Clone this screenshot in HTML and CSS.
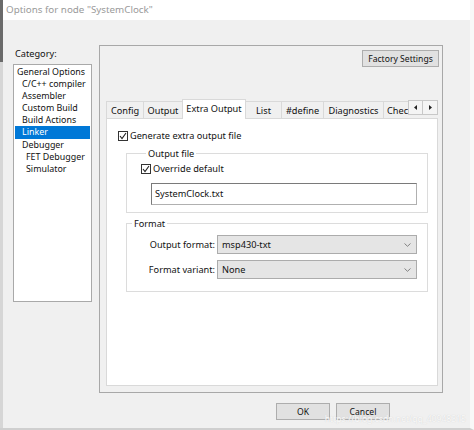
FILE: index.html
```html
<!DOCTYPE html>
<html>
<head>
<meta charset="utf-8">
<link rel="stylesheet" href="styles.css">
</head>
<body>
<div class="window">
  <div class="edge"><div class="edge-dark"></div><div class="edge-light"></div></div>
  <div class="frame">
    <div class="titlebar">Options for node "SystemClock"</div>
    <div class="client">
      <div class="left">
        <div class="cat-label">Category:</div>
        <div class="listbox">
          <div class="item lvl0">General Options</div>
          <div class="item lvl1">C/C++ compiler</div>
          <div class="item lvl1">Assembler</div>
          <div class="item lvl1">Custom Build</div>
          <div class="item lvl1">Build Actions</div>
          <div class="item lvl1 selected">Linker</div>
          <div class="item lvl1">Debugger</div>
          <div class="item lvl2">FET Debugger</div>
          <div class="item lvl2">Simulator</div>
        </div>
      </div>
      <div class="right">
        <div class="panel">
          <div class="panel-top"><div class="btn factory">Factory Settings</div></div>
          <div class="tabs">
            <div class="tab t-config">Config</div>
            <div class="tab t-output">Output</div>
            <div class="tab t-extra active">Extra Output</div>
            <div class="tab t-list">List</div>
            <div class="tab t-define">#define</div>
            <div class="tab t-diag">Diagnostics</div>
            <div class="tab t-chec">Chec</div>
            <div class="arrows">
              <div class="arrow"><svg width="4" height="5" viewBox="0 0 4 5"><polygon points="3,0 3,5 0,2.5" fill="#222"/></svg></div>
              <div class="arrow"><svg width="4" height="5" viewBox="0 0 4 5"><polygon points="1,0 1,5 4,2.5" fill="#222"/></svg></div>
            </div>
          </div>
          <div class="page">
            <div class="check-row">
              <span class="checkbox"><svg width="8" height="8" viewBox="0 0 8 8"><polyline points="1,4 3,6.5 7,1" fill="none" stroke="#222" stroke-width="1.1"/></svg></span>
              <span>Generate extra output file</span>
            </div>
            <fieldset class="group group-file">
              <legend>Output file</legend>
              <div class="check-row">
                <span class="checkbox"><svg width="8" height="8" viewBox="0 0 8 8"><polyline points="1,4 3,6.5 7,1" fill="none" stroke="#222" stroke-width="1.1"/></svg></span>
                <span>Override default</span>
              </div>
              <div class="textfield">SystemClock.txt</div>
            </fieldset>
            <fieldset class="group group-format">
              <legend>Format</legend>
              <div class="form-grid">
                <div class="flabel">Output format:</div>
                <div class="select"><span>msp430-txt</span><svg width="7" height="4" viewBox="0 0 7 4"><polyline points="0.5,0.5 3.5,3.3 6.5,0.5" fill="none" stroke="#777" stroke-width="0.9"/></svg></div>
                <div class="flabel">Format variant:</div>
                <div class="select"><span>None</span><svg width="7" height="4" viewBox="0 0 7 4"><polyline points="0.5,0.5 3.5,3.3 6.5,0.5" fill="none" stroke="#777" stroke-width="0.9"/></svg></div>
              </div>
            </fieldset>
          </div>
        </div>
        <div class="footer">
          <div class="btn ok">OK</div>
          <div class="btn cancel">Cancel</div>
        </div>
      </div>
    </div>
  </div>
  <div class="watermark">https://blog.csdn.net/qq_40948315</div>
</div>
</body>
</html>
```

FILE: styles.css
```css
* { box-sizing: border-box; }
html, body { margin: 0; padding: 0; }
body {
  width: 474px;
  height: 430px;
  overflow: hidden;
  font-family: "Noto Sans", "Open Sans", sans-serif;
  font-size: 9.2px;
  color: #111;
  background: #f0f0f0;
}
.window {
  position: relative;
  display: flex;
  width: 474px;
  height: 430px;
  border-right: 4px solid #f8f8f8;
  border-bottom: 2px solid #cfcfcf;
}
.edge { width: 3px; display: flex; flex-direction: column; }
.edge-dark { height: 62px; background: #6a6a6a; }
.edge-light { flex: 1; background: #d6d6d6; }
.frame { flex: 1; display: flex; flex-direction: column; }
.titlebar {
  height: 20px;
  background: #fff;
  color: #9a9a9a;
  font-size: 9.8px;
  line-height: 20px;
  padding-left: 3px;
}
.client {
  flex: 1;
  display: flex;
  padding-top: 25px;
  background: #f0f0f0;
}
.left {
  width: 96px;
  padding-left: 10px;
  padding-right: 7px;
}
.cat-label {
  height: 19px;
  padding-top: 2px;
  padding-left: 2px;
  line-height: 13px;
}
.listbox {
  width: 79px;
  height: 238px;
  background: #fff;
  border: 1px solid #a9a9a9;
  padding-top: 1px;
}
.item {
  height: 12.1px;
  line-height: 12.1px;
  margin: 0 1px;
  white-space: nowrap;
  font-size: 8.9px;
}
.lvl0 { padding-left: 2px; }
.lvl1 { padding-left: 7px; }
.lvl2 { padding-left: 11px; }
.item.selected { background: #0078d7; color: #fff; }

.right { display: flex; flex-direction: column; }
.panel {
  width: 344px;
  height: 348px;
  border: 1px solid #a8a8a8;
  display: flex;
  flex-direction: column;
  padding: 4px 4px 6px 6px;
}
.panel-top { display: flex; justify-content: flex-end; height: 17px; margin-right: -1px; }
.btn {
  background: #e1e1e1;
  border: 1px solid #adadad;
  display: flex;
  align-items: center;
  justify-content: center;
  height: 17px;
  white-space: nowrap;
  font-size: 8.6px;
}
.factory { width: 77px; }
.tabs {
  margin-top: 32px;
  height: 19px;
  display: flex;
  align-items: flex-end;
  position: relative;
  z-index: 1;
}
.tab {
  height: 17px;
  border: 1px solid #d9d9d9;
  border-bottom: none;
  border-right: none;
  background: #f0f0f0;
  display: flex;
  align-items: center;
  justify-content: center;
  white-space: nowrap;
  overflow: hidden;
  flex: none;
}
.tab.active {
  height: 20px;
  background: #fff;
  border-right: 1px solid #d9d9d9;
  margin-bottom: -1px;
  padding-bottom: 2px;
}
.t-config { width: 37px; }
.t-output { width: 39px; }
.t-extra { width: 64px; }
.t-list { width: 35px; border-left: none; }
.t-define { width: 42px; }
.t-diag { width: 60px; }
.t-chec { width: 25px; justify-content: flex-start; padding-left: 3px; }
.arrows { display: flex; align-self: flex-start; margin-top: 1px; }
.arrow {
  width: 15px;
  height: 15px;
  border: 1px solid #c8c8c8;
  background: #f4f4f4;
  display: flex;
  align-items: center;
  justify-content: center;
}
.arrow + .arrow { border-left: none; }
.page {
  flex: 1;
  width: 332px;
  background: #fff;
  border: 1px solid #d9d9d9;
  padding: 10px 9px 0 11px;
}
.check-row {
  display: flex;
  align-items: center;
  height: 13px;
  line-height: 13px;
}
.checkbox {
  width: 10px;
  height: 10px;
  border: 1px solid #333;
  display: flex;
  align-items: center;
  justify-content: center;
  margin-right: 2px;
  background: #fff;
}
.group {
  margin: 0 0 0 8px;
  border: 1px solid #dcdcdc;
  min-width: 0;
}
.group legend {
  padding: 0 2px;
  margin-left: 5px;
  line-height: 13px;
  height: 13px;
}
.group-file {
  margin-top: 5px;
  padding: 2px 10px 7px 14px;
}
.textfield {
  margin: 8px 0 0 10px;
  height: 22px;
  border: 1px solid #7a7a7a;
  border-right-color: #b0b0b0;
  border-bottom-color: #b0b0b0;
  padding-left: 3px;
  line-height: 20px;
}
.group-format {
  margin-top: 4px;
  padding: 5px 10px 12px 0;
}
.form-grid {
  display: grid;
  grid-template-columns: 88px 200px;
  column-gap: 2px;
  row-gap: 6px;
  align-items: center;
}
.flabel { text-align: right; white-space: nowrap; }
.select {
  height: 19px;
  background: #e5e5e5;
  border: 1px solid #acacac;
  display: flex;
  align-items: center;
  justify-content: space-between;
  padding: 0 5px 0 4px;
}
.footer {
  display: flex;
  justify-content: flex-end;
  gap: 6px;
  padding-top: 10px;
  padding-right: 53px;
}
.ok, .cancel { width: 54px; }
.watermark {
  position: absolute;
  right: 4px;
  bottom: 3px;
  font-size: 8.6px;
  color: #fafafa;
  text-shadow: 0 0 1px #c8c8c8;
  white-space: nowrap;
}
```
